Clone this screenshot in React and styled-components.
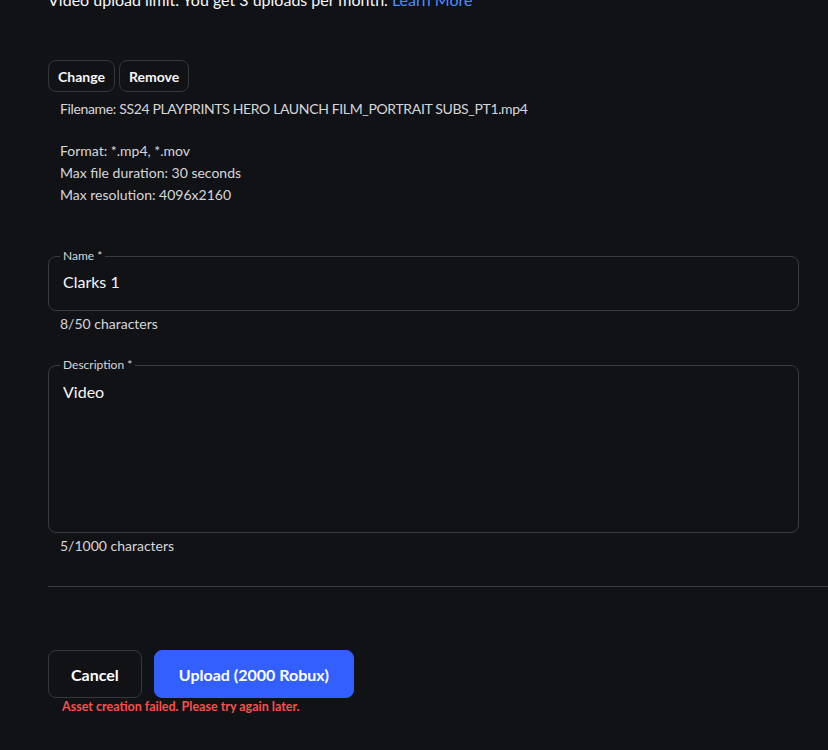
import React from 'react';
import styled, { createGlobalStyle } from 'styled-components';

const GlobalStyle = createGlobalStyle`
  html, body {
    margin: 0;
    padding: 0;
    background: #111216;
    overflow: hidden;
  }
  body {
    font-family: Lato, 'Noto Sans', sans-serif;
    color: #f7f7f8;
  }
`;

const Page = styled.main`
  padding: 0 0 0 48px;
  height: 750px;
`;

const Form = styled.div`
  padding-right: 29px;
`;

const Notice = styled.p`
  margin: -12px 0 0;
  font-size: 16px;
  line-height: 24px;
  color: #f7f7f8;

  a {
    color: #4d8dff;
    text-decoration: none;
  }
`;

const ButtonRow = styled.div`
  display: flex;
  gap: ${({ $gap }) => $gap || 4}px;
  margin-top: ${({ $top }) => $top || 0}px;
`;

const SmallButton = styled.button`
  height: 32px;
  padding: 0 9px;
  border: 1px solid #36373c;
  border-radius: 8px;
  background: transparent;
  color: #f7f7f8;
  font-family: inherit;
  font-size: 14px;
  font-weight: 700;
  cursor: pointer;
`;

const FileInfo = styled.div`
  padding-left: 12px;
  margin-top: 6px;
  font-size: 14px;
  line-height: 22px;
  color: #d6d6da;

  p {
    margin: 0;
  }

  p:first-child {
    margin-bottom: 20px;
    letter-spacing: -0.35px;
  }
`;

const Field = styled.fieldset`
  margin: ${({ $top }) => $top}px 0 0;
  padding: 0 14px 0 14px;
  border: 1px solid #3a3b40;
  border-radius: 8px;
  min-width: 0;
`;

const Legend = styled.legend`
  padding: 0 3px;
  margin-left: -3px;
  font-size: 12px;
  line-height: 14px;
  color: #d6d6da;
`;

const TextInput = styled.input`
  display: block;
  width: 100%;
  height: 47px;
  padding: 0 0 11px;
  margin: 0;
  border: none;
  outline: none;
  background: transparent;
  color: #f7f7f8;
  font-family: inherit;
  font-size: 16px;
  line-height: 24px;
  box-sizing: border-box;
`;

const TextArea = styled.textarea`
  display: block;
  width: 100%;
  height: 160px;
  padding: 8px 0 0;
  margin: 0;
  border: none;
  outline: none;
  resize: none;
  background: transparent;
  color: #f7f7f8;
  font-family: inherit;
  font-size: 16px;
  line-height: 24px;
  box-sizing: border-box;
`;

const Helper = styled.div`
  padding-left: 12px;
  margin-top: 3px;
  font-size: 14px;
  line-height: 20px;
  color: #d6d6da;
`;

const Divider = styled.hr`
  margin: 30px -29px 0 0;
  border: none;
  border-top: 1px solid #3a3b40;
`;

const ActionButton = styled.button`
  height: 48px;
  padding: 0 ${({ $primary }) => ($primary ? 24 : 22)}px;
  border-radius: 8px;
  border: 1px solid ${({ $primary }) => ($primary ? '#335fff' : '#36373c')};
  background: ${({ $primary }) => ($primary ? '#335fff' : 'transparent')};
  color: #ffffff;
  font-family: inherit;
  font-size: 16px;
  font-weight: 700;
  cursor: pointer;
`;

const ErrorText = styled.div`
  padding-left: 14px;
  margin-top: 1px;
  font-size: 12.5px;
  line-height: 16px;
  font-weight: 700;
  color: #ff4d4d;
`;

export default function App() {
  return (
    <>
      <GlobalStyle />
      <Page>
        <Form>
          <Notice>
            Video upload limit. You get 3 uploads per month. <a href="#">Learn More</a>
          </Notice>

          <ButtonRow $top={48}>
            <SmallButton>Change</SmallButton>
            <SmallButton>Remove</SmallButton>
          </ButtonRow>

          <FileInfo>
            <p>Filename: SS24 PLAYPRINTS HERO LAUNCH FILM_PORTRAIT SUBS_PT1.mp4</p>
            <p>Format: *.mp4, *.mov</p>
            <p>Max file duration: 30 seconds</p>
            <p>Max resolution: 4096x2160</p>
          </FileInfo>

          <Field $top={43}>
            <Legend>Name *</Legend>
            <TextInput defaultValue="Clarks 1" readOnly />
          </Field>
          <Helper>8/50 characters</Helper>

          <Field $top={24}>
            <Legend>Description *</Legend>
            <TextArea defaultValue="Video" readOnly />
          </Field>
          <Helper>5/1000 characters</Helper>

          <Divider />

          <ButtonRow $gap={12} $top={63}>
            <ActionButton>Cancel</ActionButton>
            <ActionButton $primary>Upload (2000 Robux)</ActionButton>
          </ButtonRow>
          <ErrorText>Asset creation failed. Please try again later.</ErrorText>
        </Form>
      </Page>
    </>
  );
}
